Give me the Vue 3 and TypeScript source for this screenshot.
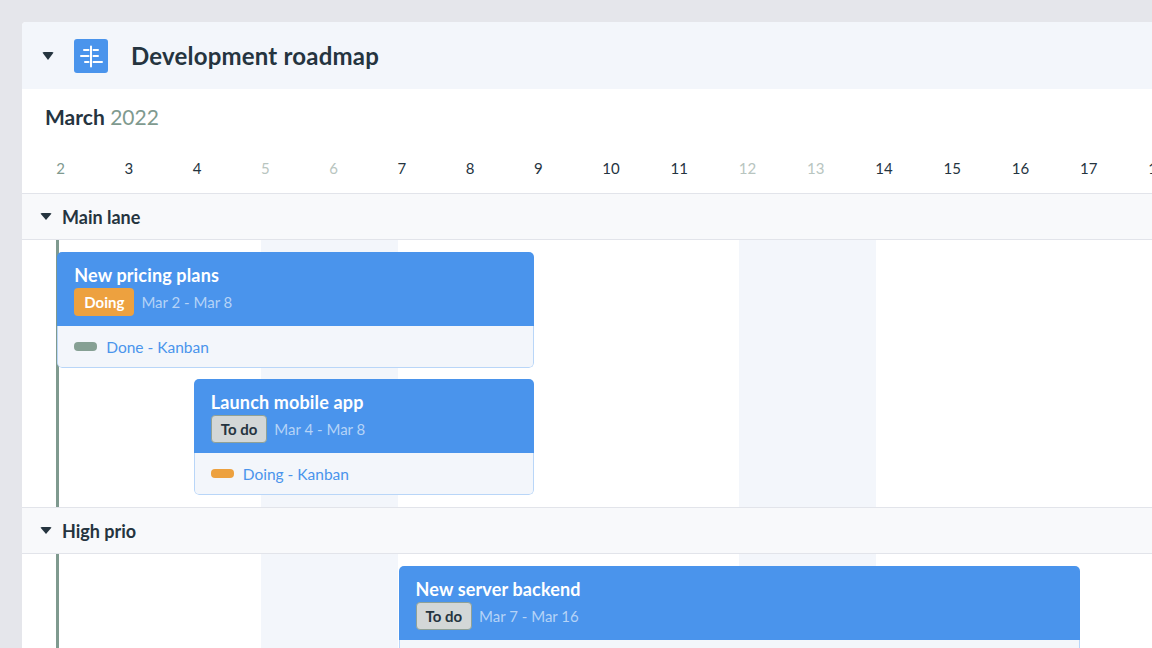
<script setup lang="ts">
interface Card { title: string; badge: string; badgeKind: string; dates: string; link: string; pill: string; col: string }
interface Lane { name: string; cards: Card[] }

const days = [
  { n: 2, kind: 'past' }, { n: 3, kind: '' }, { n: 4, kind: '' }, { n: 5, kind: 'off' }, { n: 6, kind: 'off' },
  { n: 7, kind: '' }, { n: 8, kind: '' }, { n: 9, kind: '' }, { n: 10, kind: '' }, { n: 11, kind: '' },
  { n: 12, kind: 'off' }, { n: 13, kind: 'off' }, { n: 14, kind: '' }, { n: 15, kind: '' }, { n: 16, kind: '' },
  { n: 17, kind: '' }, { n: 18, kind: '' },
]

const lanes: Lane[] = [
  {
    name: 'Main lane',
    cards: [
      { title: 'New pricing plans', badge: 'Doing', badgeKind: 'doing', dates: 'Mar 2 - Mar 8', link: 'Done - Kanban', pill: 'done', col: '1 / span 7' },
      { title: 'Launch mobile app', badge: 'To do', badgeKind: 'todo', dates: 'Mar 4 - Mar 8', link: 'Doing - Kanban', pill: 'doing', col: '3 / span 5' },
    ],
  },
  {
    name: 'High prio',
    cards: [
      { title: 'New server backend', badge: 'To do', badgeKind: 'todo', dates: 'Mar 7 - Mar 16', link: 'To do - Kanban', pill: 'todo', col: '6 / span 10' },
    ],
  },
]
</script>

<template>
  <div class="page">
    <section class="board">
      <header class="head">
        <span class="caret"></span>
        <span class="logo">
          <svg viewBox="0 0 34 34" width="34" height="34" fill="none" stroke="#fff" stroke-width="2" stroke-linecap="round">
            <path d="M17 7.5V27.5M10 11H14.5M7 17H14.5M11 23H14.5M19.5 11H24M19.5 17H24M19.5 23H28" />
          </svg>
        </span>
        <h1 class="title">Development roadmap</h1>
      </header>
      <div class="month"><b>March</b> <span>2022</span></div>
      <div class="days">
        <span v-for="d in days" :key="d.n" class="day" :class="d.kind">{{ d.n }}</span>
      </div>
      <div v-for="lane in lanes" :key="lane.name" class="lane">
        <div class="lane-head">
          <span class="caret small"></span>
          <span class="lane-name">{{ lane.name }}</span>
        </div>
        <div class="lane-body">
          <span class="weekend w1"></span>
          <span class="weekend w2"></span>
          <span class="today"></span>
          <article
            v-for="(c, i) in lane.cards"
            :key="c.title"
            class="card"
            :style="{ gridColumn: c.col, gridRow: i + 1 }"
          >
            <div class="card-top">
              <div class="card-title">{{ c.title }}</div>
              <div class="card-meta">
                <span class="badge" :class="c.badgeKind">{{ c.badge }}</span>
                <span class="dates">{{ c.dates }}</span>
              </div>
            </div>
            <div class="card-foot">
              <span class="pill" :class="c.pill"></span>
              <span class="link">{{ c.link }}</span>
            </div>
          </article>
        </div>
      </div>
    </section>
  </div>
</template>

<style>
html, body { margin: 0; background: #e5e6eb; }
</style>

<style scoped>
.page {
  width: 1152px;
  height: 648px;
  overflow: hidden;
  box-sizing: border-box;
  padding: 22px 0 0 22px;
  background: #e5e6eb;
  font-family: "Lato", "Noto Sans", sans-serif;
  color: #25343f;
}
.board {
  width: 1200px;
  height: 700px;
  background: #fff;
  border-radius: 4px 0 0 0;
  overflow: hidden;
}
.head {
  height: 67px;
  background: #f3f6fb;
  display: flex;
  align-items: center;
  padding-left: 20px;
}
.caret {
  width: 0;
  height: 0;
  border-left: 6.5px solid transparent;
  border-right: 6.5px solid transparent;
  border-top: 8px solid #25343f;
  border-radius: 2px;
}
.caret.small {
  border-left-width: 6px;
  border-right-width: 6px;
  border-top-width: 7.5px;
}
.logo {
  width: 34px;
  height: 34px;
  margin-left: 20px;
  background: #4a94ec;
  border-radius: 3px;
  display: block;
}
.logo svg { display: block; }
.title {
  margin: 0 0 0 23px;
  font-size: 24px;
  font-weight: 700;
  letter-spacing: 0.2px;
}
.month {
  height: 56px;
  box-sizing: border-box;
  padding: 14px 0 0 23px;
  font-size: 21px;
  line-height: 28px;
}
.month span { color: #7f9a8f; }
.days {
  height: 48px;
  display: grid;
  grid-template-columns: repeat(17, 68.25px);
  padding-left: 34.25px;
  align-items: center;
  font-size: 15px;
  line-height: 20px;
  padding-bottom: 2px;
  box-sizing: border-box;
}
.day { color: #25343f; }
.day.past { color: #7f9a8f; }
.day.off { color: #b8c5c0; }
.lane-head {
  height: 47px;
  box-sizing: border-box;
  background: #f8f9fb;
  border-top: 1px solid #e2e4ea;
  border-bottom: 1px solid #e2e4ea;
  display: flex;
  align-items: center;
  padding-left: 18px;
}
.lane-name {
  margin-left: 10px;
  font-size: 18px;
  font-weight: 700;
}
.lane-body {
  position: relative;
  height: 267px;
  box-sizing: border-box;
  padding: 12px 0 0 34.25px;
  display: grid;
  grid-template-columns: repeat(17, 68.25px);
  grid-auto-rows: max-content;
  row-gap: 11px;
}
.lane:last-child .lane-body { height: auto; }
.weekend {
  position: absolute;
  top: 0;
  bottom: 0;
  width: 136.5px;
  background: #f3f6fb;
}
.w1 { left: 239px; }
.w2 { left: 717px; }
.today {
  position: absolute;
  left: 34px;
  top: 0;
  bottom: 0;
  width: 2.5px;
  background: #7f9a8f;
}
.card {
  position: relative;
  border-radius: 5px;
  overflow: hidden;
  margin-left: 1px;
  box-sizing: border-box;
}
.card-top {
  height: 74px;
  box-sizing: border-box;
  background: #4a94ec;
  padding: 11px 0 0 17px;
  color: #fff;
}
.card-title {
  font-size: 18px;
  font-weight: 700;
  line-height: 24px;
  letter-spacing: 0.15px;
}
.card-meta {
  display: flex;
  align-items: center;
  margin-top: 1px;
}
.badge {
  height: 28px;
  box-sizing: border-box;
  border-radius: 4px;
  padding: 0 9px;
  font-size: 15px;
  font-weight: 700;
  line-height: 27px;
  border: 1px solid transparent;
}
.badge.doing { background: #eda13f; color: #fff; }
.badge.todo { background: #d3d7d7; color: #25343f; border-color: #8fa197; }
.dates {
  margin-left: 7px;
  font-size: 15px;
  color: #b5d3f7;
}
.card-foot {
  height: 42px;
  box-sizing: border-box;
  background: #f3f6fb;
  border: 1px solid #b9d6f8;
  border-top: 0;
  border-radius: 0 0 5px 5px;
  padding-left: 16px;
  display: flex;
  align-items: center;
}
.pill {
  width: 23px;
  height: 9px;
  border-radius: 4px;
}
.pill.done { background: #86a094; }
.pill.doing { background: #eda13f; }
.pill.todo { background: #d3d7d7; }
.link {
  margin-left: 9px;
  font-size: 15.5px;
  color: #4a94ec;
}
</style>
